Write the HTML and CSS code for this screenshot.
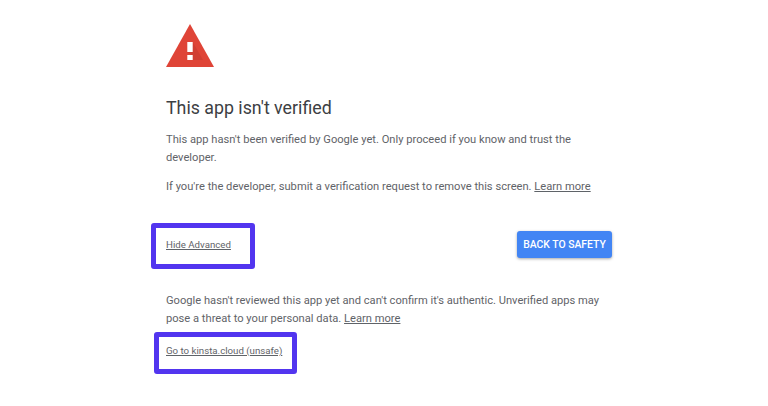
FILE: index.html
```html
<!DOCTYPE html>
<html lang="en">
<head>
    <meta charset="UTF-8">
    <meta name="viewport" content="width=device-width, initial-scale=1.0">
    <title>This app isn't verified</title>
    <link rel="stylesheet" href="styles.css">
</head>
<body>
    <div class="container">
        <svg class="warning-icon" viewBox="0 0 48 43" width="48" height="43">
            <path d="M24 0 L48 43 L0 43 Z" fill="#df4437"/>
            <path d="M26.7 18 L37 36 L32 36 L21.3 28 Z M26.7 31 L32 36 L26 36 Z" fill="#d03e33"/>
            <rect x="21.3" y="18" width="5.4" height="10" fill="#fff"/>
            <rect x="21.3" y="31" width="5.4" height="5" fill="#fff"/>
        </svg>
        <h1>This app isn't verified</h1>
        <p class="intro">This app hasn't been verified by Google yet. Only proceed if you know and trust the developer.</p>
        <p class="dev-note">If you're the developer, submit a verification request to remove this screen. <a href="#">Learn more</a></p>
        <div class="actions">
            <div class="highlight highlight-hide"><a class="small-link" href="#">Hide Advanced</a></div>
            <button class="back-button">BACK TO SAFETY</button>
        </div>
        <p class="advanced">Google hasn't reviewed this app yet and can't confirm it's authentic. Unverified apps may pose a threat to your personal data. <a href="#">Learn more</a></p>
        <div class="highlight highlight-go"><a class="small-link" href="#">Go to kinsta.cloud (unsafe)</a></div>
    </div>
</body>
</html>
```

FILE: styles.css
```css
body {
    margin: 0;
    background-color: white;
    font-family: "Roboto", "Liberation Sans", sans-serif;
    color: #5f6368;
}

.container {
    width: 446px;
    margin-left: 166px;
    padding-top: 24px;
}

.warning-icon {
    display: block;
}

h1 {
    margin: 29px 0 0;
    font-size: 17.8px;
    line-height: 24px;
    font-weight: 400;
    color: #3c4043;
}

p {
    margin: 0;
    font-size: 11.15px;
    line-height: 18px;
}

a {
    color: #5f6368;
}

.intro {
    margin-top: 11px;
}

.dev-note {
    margin-top: 11px;
}

.actions {
    display: flex;
    justify-content: space-between;
    align-items: flex-start;
    margin-top: 27px;
}

.highlight {
    box-sizing: border-box;
    display: flex;
    align-items: center;
    border: 5px solid #5235ef;
    border-radius: 3px;
    padding-bottom: 4px;
}

.highlight-hide {
    width: 104px;
    height: 46px;
    margin-left: -15px;
    padding-left: 10px;
}

.highlight-go {
    width: 143px;
    height: 42px;
    margin-left: -12px;
    margin-top: 4px;
    padding-left: 7px;
    padding-bottom: 5px;
}

.small-link {
    font-size: 9.7px;
}

.back-button {
    width: 95px;
    height: 27px;
    margin-top: 8px;
    padding: 0;
    border: none;
    border-radius: 3px;
    background-color: #4285f4;
    color: white;
    font-family: inherit;
    font-size: 10.4px;
    font-weight: 500;
    box-shadow: 0 1px 3px rgba(0,0,0,0.35);
}

.advanced {
    margin-top: 23px;
}
```
